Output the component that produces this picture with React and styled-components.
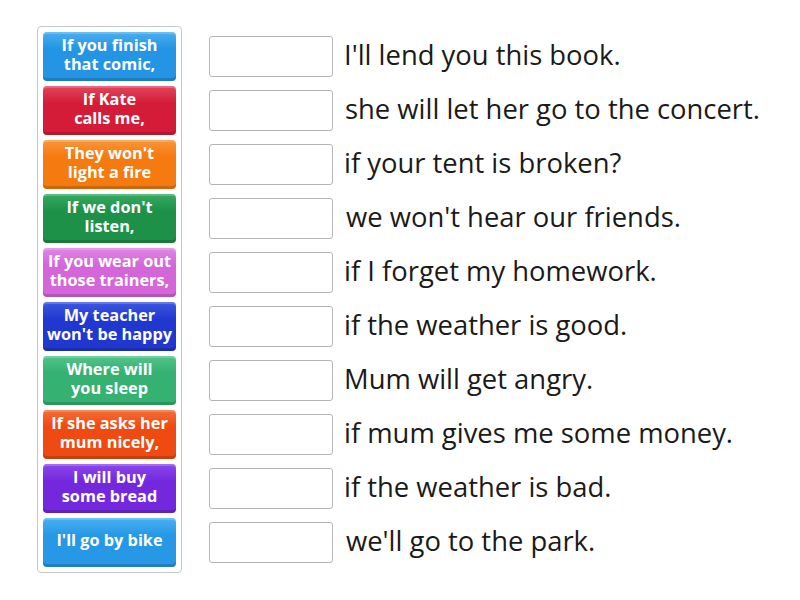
import React from 'react'
import styled, { createGlobalStyle } from "styled-components";

const GlobalStyle = createGlobalStyle`
  body {
    margin: 0;
    background: #fff;
    font-family: "Open Sans", "Liberation Sans", sans-serif;
  }
`;

const Page = styled.div`
  display: flex;
  align-items: flex-start;
  padding: 26px 0 0 37px;
`;

const Bank = styled.div`
  display: flex;
  flex-direction: column;
  gap: 5px;
  padding: 5px;
  border: 1px solid #c8c8c8;
  border-radius: 4px;
  background: #fff;
`;

const Tile = styled.div`
  width: 133px;
  height: 49px;
  box-sizing: border-box;
  border-radius: 4px;
  display: flex;
  align-items: center;
  justify-content: center;
  text-align: center;
  color: #fff;
  font-weight: 700;
  font-size: 16.3px;
  line-height: 18.5px;
  padding: 0 1px 4px;
  background: linear-gradient(to bottom, ${p => p.$light} 0%, ${p => p.$base} 35%, ${p => p.$base} 100%);
  box-shadow: inset 0 -3px 0 rgba(0, 0, 0, 0.16), inset 0 2px 0 rgba(255, 255, 255, 0.2);
`;

const Answers = styled.div`
  display: flex;
  flex-direction: column;
  gap: 13px;
  margin: 10px 0 0 27px;
`;

const Row = styled.div`
  display: flex;
  align-items: center;
  height: 41px;
`;

const Slot = styled.div`
  width: 124px;
  height: 41px;
  box-sizing: border-box;
  border: 1px solid #b5b5b5;
  border-radius: 3px;
  background: #fff;
  flex-shrink: 0;
`;

const Label = styled.span`
  margin-left: ${p => p.$indent || 11}px;
  padding-bottom: 4px;
  font-size: 27.4px;
  color: #1a1a1a;
  white-space: nowrap;
`;

const tiles = [
  { text: ["If you finish", "that comic,"], base: "#2494e4", light: "#4aaef0" },
  { text: ["If Kate", "calls me,"], base: "#d41c38", light: "#e2455e" },
  { text: ["They won't", "light a fire"], base: "#f57a10", light: "#fb9538" },
  { text: ["If we don't", "listen,"], base: "#1e9148", light: "#36aa60" },
  { text: ["If you wear out", "those trainers,"], base: "#d466da", light: "#e086e5" },
  { text: ["My teacher", "won't be happy"], base: "#2138d0", light: "#3d58e2" },
  { text: ["Where will", "you sleep"], base: "#35b172", light: "#52c489" },
  { text: ["If she asks her", "mum nicely,"], base: "#ee4a12", light: "#f76c36" },
  { text: ["I will buy", "some bread"], base: "#7428de", light: "#8c48ec" },
  { text: ["I'll go by bike"], base: "#2698e6", light: "#4ab0f1" },
];

const answers = [
  { text: "I'll lend you this book.", indent: 11 },
  { text: "she will let her go to the concert.", indent: 12 },
  { text: "if your tent is broken?", indent: 11 },
  { text: "we won't hear our friends.", indent: 13 },
  { text: "if I forget my homework.", indent: 11 },
  { text: "if the weather is good.", indent: 11 },
  { text: "Mum will get angry.", indent: 11 },
  { text: "if mum gives me some money.", indent: 11 },
  { text: "if the weather is bad.", indent: 11 },
  { text: "we'll go to the park.", indent: 13 },
];

const App = () => {
  return (
    <>
      <GlobalStyle />
      <Page>
        <Bank>
          {tiles.map((t, i) => (
            <Tile key={i} $base={t.base} $light={t.light}>
              <span>
                {t.text[0]}
                {t.text[1] && <br />}
                {t.text[1]}
              </span>
            </Tile>
          ))}
        </Bank>
        <Answers>
          {answers.map((a, i) => (
            <Row key={i}>
              <Slot />
              <Label $indent={a.indent}>{a.text}</Label>
            </Row>
          ))}
        </Answers>
      </Page>
    </>
  )
}

export default App
